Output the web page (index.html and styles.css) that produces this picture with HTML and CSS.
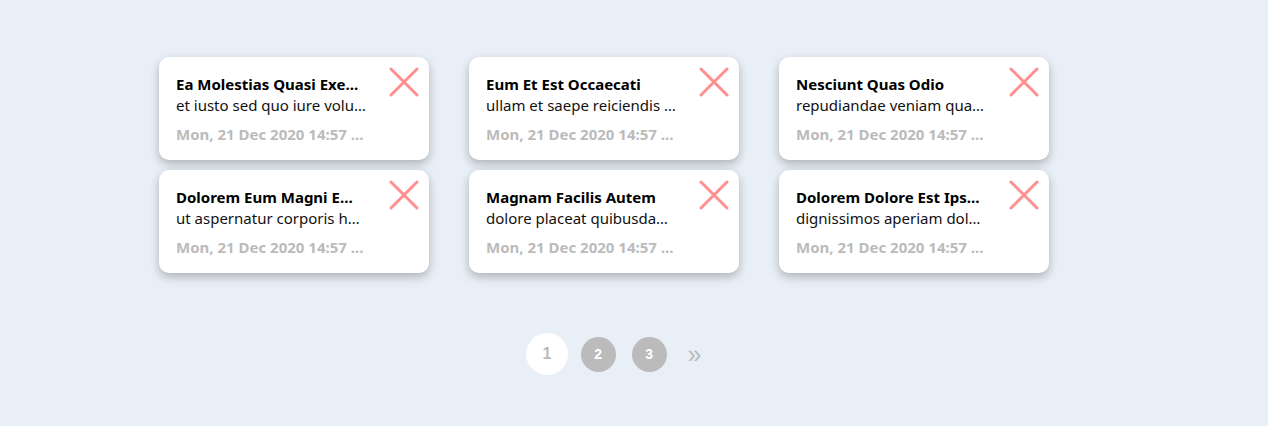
FILE: index.html
```html
<!DOCTYPE html>
<html lang="en">
<head>
    <meta charset="UTF-8">
    <meta name="viewport" content="width=device-width, initial-scale=1.0">
    <title>Notes</title>
    <link rel="stylesheet" href="styles.css">
</head>
<body>
    <div class="page">
        <div class="notes">
            <div class="note">
                <div class="note-text">
                    <div class="note-title">Ea Molestias Quasi Exercitationem</div>
                    <div class="note-body">et iusto sed quo iure voluptatem</div>
                    <div class="note-date">Mon, 21 Dec 2020 14:57 GMT</div>
                </div>
                <button class="note-close" aria-label="Delete">
                    <svg viewBox="0 0 30 30"><path d="M2 2L28 28M28 2L2 28"/></svg>
                </button>
            </div>
            <div class="note">
                <div class="note-text">
                    <div class="note-title">Eum Et Est Occaecati</div>
                    <div class="note-body">ullam et saepe reiciendis voluptatem</div>
                    <div class="note-date">Mon, 21 Dec 2020 14:57 GMT</div>
                </div>
                <button class="note-close" aria-label="Delete">
                    <svg viewBox="0 0 30 30"><path d="M2 2L28 28M28 2L2 28"/></svg>
                </button>
            </div>
            <div class="note">
                <div class="note-text">
                    <div class="note-title">Nesciunt Quas Odio</div>
                    <div class="note-body">repudiandae veniam quaerat sunt sed</div>
                    <div class="note-date">Mon, 21 Dec 2020 14:57 GMT</div>
                </div>
                <button class="note-close" aria-label="Delete">
                    <svg viewBox="0 0 30 30"><path d="M2 2L28 28M28 2L2 28"/></svg>
                </button>
            </div>
            <div class="note">
                <div class="note-text">
                    <div class="note-title">Dolorem Eum Magni Eos Aperiam</div>
                    <div class="note-body">ut aspernatur corporis harum nihil</div>
                    <div class="note-date">Mon, 21 Dec 2020 14:57 GMT</div>
                </div>
                <button class="note-close" aria-label="Delete">
                    <svg viewBox="0 0 30 30"><path d="M2 2L28 28M28 2L2 28"/></svg>
                </button>
            </div>
            <div class="note">
                <div class="note-text">
                    <div class="note-title">Magnam Facilis Autem</div>
                    <div class="note-body">dolore placeat quibusdam ea quo vitae</div>
                    <div class="note-date">Mon, 21 Dec 2020 14:57 GMT</div>
                </div>
                <button class="note-close" aria-label="Delete">
                    <svg viewBox="0 0 30 30"><path d="M2 2L28 28M28 2L2 28"/></svg>
                </button>
            </div>
            <div class="note">
                <div class="note-text">
                    <div class="note-title">Dolorem Dolore Est Ipsam</div>
                    <div class="note-body">dignissimos aperiam dolorem qui eum</div>
                    <div class="note-date">Mon, 21 Dec 2020 14:57 GMT</div>
                </div>
                <button class="note-close" aria-label="Delete">
                    <svg viewBox="0 0 30 30"><path d="M2 2L28 28M28 2L2 28"/></svg>
                </button>
            </div>
        </div>

        <div class="pagination">
            <span class="page-btn active">1</span>
            <span class="page-btn">2</span>
            <span class="page-btn">3</span>
            <span class="page-next">&raquo;</span>
        </div>
    </div>
</body>
</html>
```

FILE: styles.css
```css
* {
    margin: 0;
    padding: 0;
    box-sizing: border-box;
}

body {
    background: #e9eff6;
    font-family: 'Noto Sans', 'Open Sans', sans-serif;
}

.page {
    width: 950px;
    margin: 0 auto;
    padding-top: 57px;
}

.notes {
    display: grid;
    grid-template-columns: repeat(3, 270px);
    column-gap: 40px;
    row-gap: 10px;
}

.note {
    background: #fff;
    border-radius: 10px;
    height: 103px;
    box-shadow: 0 4px 10px rgba(0, 0, 0, 0.25);
    display: flex;
    justify-content: space-between;
    padding: 17px 10px 0 17px;
}

.note-text {
    width: 190px;
    font-size: 15px;
    line-height: 21px;
}

.note-title,
.note-body,
.note-date {
    white-space: nowrap;
    overflow: hidden;
    text-overflow: ellipsis;
}

.note-title {
    margin-right: 4px;
    font-weight: bold;
    color: #000;
}

.note-body {
    color: #111;
}

.note-date {
    margin-top: 8px;
    font-weight: bold;
    color: #bbb;
}

.note-close {
    background: none;
    border: none;
    width: 30px;
    height: 30px;
    margin-top: -7px;
    cursor: pointer;
}

.note-close svg {
    width: 30px;
    height: 30px;
    display: block;
    stroke: #ff8f8f;
    stroke-width: 3;
    stroke-linecap: round;
}

.pagination {
    display: flex;
    align-items: center;
    justify-content: center;
    margin-top: 60px;
    padding-right: 45px;
    font-family: 'Liberation Sans', Arial, sans-serif;
}

.page-btn {
    width: 35px;
    height: 35px;
    margin: 0 8px;
    border-radius: 50%;
    background: #bbb;
    color: #fff;
    font-size: 14px;
    font-weight: bold;
    display: flex;
    align-items: center;
    justify-content: center;
    cursor: pointer;
}

.page-btn.active {
    width: 42px;
    height: 42px;
    margin: 0 4.5px;
    font-size: 16px;
    background: #fff;
    color: #bbb;
}

.page-next {
    color: #bbb;
    font-size: 25px;
    margin-left: 13px;
    margin-top: 1px;
    cursor: pointer;
}
```
